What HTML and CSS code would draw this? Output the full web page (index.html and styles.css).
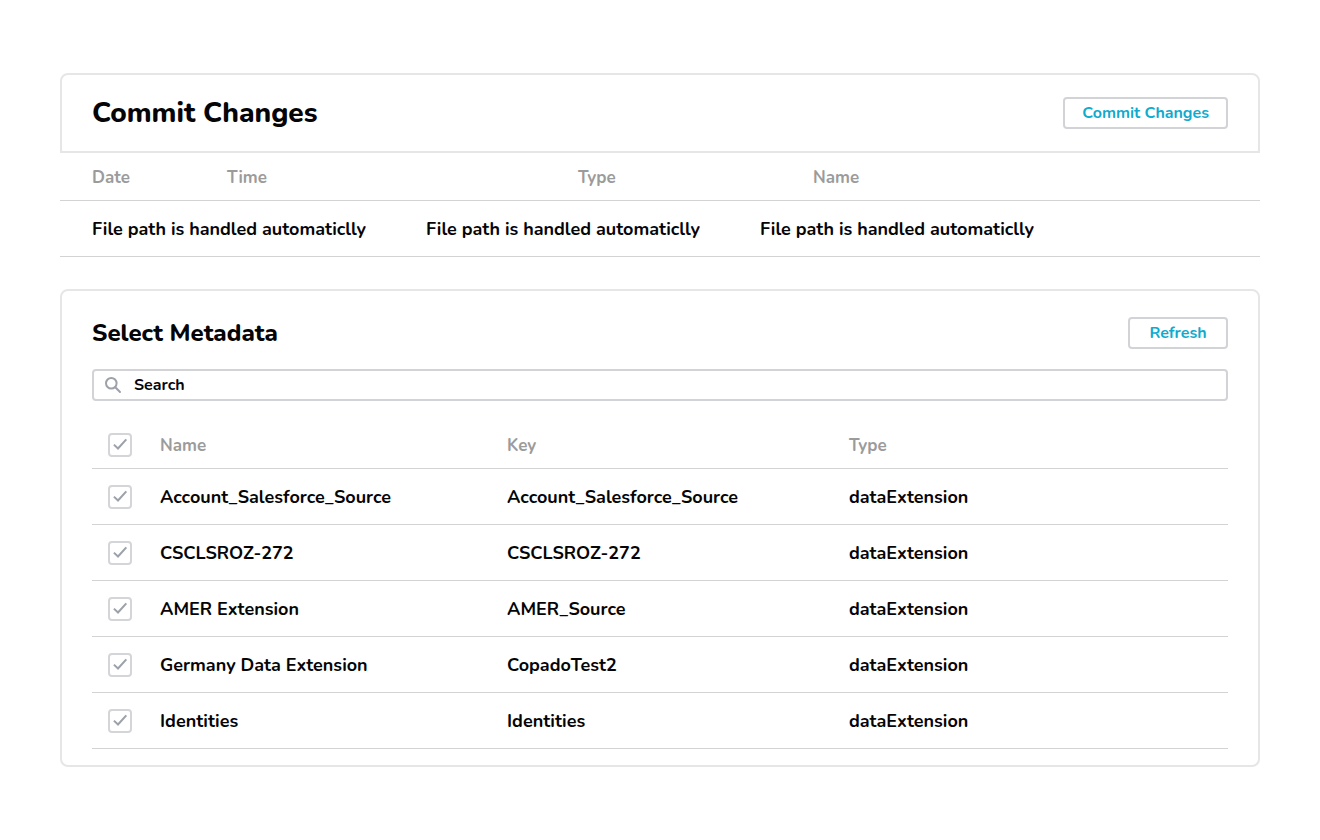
FILE: index.html
```html
<!DOCTYPE html>
<html lang="en">
<head>
<meta charset="utf-8">
<meta name="viewport" content="width=device-width, initial-scale=1">
<title>Commit Changes</title>
<link rel="stylesheet" href="styles.css">
</head>
<body>
<main class="page">
  <section class="commit">
    <header class="commit-header">
      <h1 class="commit-title">Commit Changes</h1>
      <button class="button" type="button">Commit Changes</button>
    </header>
    <table class="commit-table">
      <thead>
        <tr class="commit-columns"><th scope="col">Date</th><th scope="col">Time</th><th scope="col">Type</th><th scope="col">Name</th></tr>
      </thead>
      <tbody>
        <tr class="commit-row"><td>File path is handled automaticlly</td><td>File path is handled automaticlly</td><td>File path is handled automaticlly</td></tr>
      </tbody>
    </table>
  </section>

  <section class="metadata">
    <header class="metadata-header">
      <h2 class="metadata-title">Select Metadata</h2>
      <button class="button" type="button">Refresh</button>
    </header>
    <label class="search">
      <svg class="search-icon" viewBox="0 0 18 18" aria-hidden="true"><circle cx="7.3" cy="7.3" r="5.3"/><path d="M11.3 11.3 16 16"/></svg>
      <input class="search-input" type="search" placeholder="Search" aria-label="Search">
    </label>
    <table class="metadata-table">
      <colgroup><col class="col-check"><col class="col-name"><col class="col-key"><col class="col-type"></colgroup>
      <thead>
        <tr><th class="check-cell"><input class="check" type="checkbox" checked aria-label="Select all"></th><th scope="col">Name</th><th scope="col">Key</th><th scope="col">Type</th></tr>
      </thead>
      <tbody>
        <tr><td class="check-cell"><input class="check" type="checkbox" checked aria-label="Select Account_Salesforce_Source"></td><td>Account_Salesforce_Source</td><td>Account_Salesforce_Source</td><td>dataExtension</td></tr>
        <tr><td class="check-cell"><input class="check" type="checkbox" checked aria-label="Select CSCLSROZ-272"></td><td>CSCLSROZ-272</td><td>CSCLSROZ-272</td><td>dataExtension</td></tr>
        <tr><td class="check-cell"><input class="check" type="checkbox" checked aria-label="Select AMER Extension"></td><td>AMER Extension</td><td>AMER_Source</td><td>dataExtension</td></tr>
        <tr><td class="check-cell"><input class="check" type="checkbox" checked aria-label="Select Germany Data Extension"></td><td>Germany Data Extension</td><td>CopadoTest2</td><td>dataExtension</td></tr>
        <tr><td class="check-cell"><input class="check" type="checkbox" checked aria-label="Select Identities"></td><td>Identities</td><td>Identities</td><td>dataExtension</td></tr>
      </tbody>
    </table>
  </section>
</main>
</body>
</html>
```
FILE: styles.css
```css
* { box-sizing: border-box; }

body {
  margin: 0;
  background: #fff;
  color: #050507;
  font-family: Nunito, "Open Sans", "Noto Sans", sans-serif;
  font-size: 18px;
  font-weight: 700;
  line-height: 24px;
}

.page {
  display: flex;
  flex-direction: column;
  gap: 32px;
  padding: 73px 60px;
}

.commit-header {
  display: flex;
  align-items: center;
  justify-content: space-between;
  padding: 22px 30px;
  border: 2px solid #e6e6e7;
  border-radius: 8px 8px 0 0;
}

.commit-title,
.metadata-title {
  margin: 0;
  font-weight: 800;
  line-height: 32px;
}

.commit-title { font-size: 28px; }
.metadata-title { font-size: 24px; }

.button {
  min-width: 100px;
  height: 32px;
  padding: 0 17px;
  border: 2px solid #d1d3d7;
  border-radius: 4px;
  background: #fff;
  color: #10aace;
  font: inherit;
  font-size: 16px;
  font-weight: 700;
  line-height: 20px;
}

table {
  width: 100%;
  border-collapse: separate;
  border-spacing: 0;
}

th,
td {
  padding: 0;
  text-align: left;
  font-weight: 700;
}

th {
  padding-top: 2px;
  color: #9b9b9b;
  font-size: 17px;
}

.commit-table,
.commit-table thead,
.commit-table tbody { display: block; }

.commit-columns,
.commit-row {
  display: grid;
  align-items: center;
  padding: 0 32px;
  border-bottom: 1px solid #d3d3d4;
}

.commit-columns {
  grid-template-columns: 135fr 351fr 235fr 415fr;
  height: 48px;
}

.commit-row {
  grid-template-columns: 334fr 334fr 468fr;
  height: 56px;
}

.metadata {
  padding: 26px 30px 16px;
  border: 2px solid #e6e6e7;
  border-radius: 8px;
}

.metadata-header {
  display: flex;
  align-items: center;
  justify-content: space-between;
  margin-bottom: 20px;
}

.search {
  display: flex;
  align-items: center;
  gap: 12px;
  height: 32px;
  padding: 0 10px;
  margin-bottom: 20px;
  border: 2px solid #d1d3d6;
  border-radius: 4px;
}

.search-icon {
  flex: none;
  width: 18px;
  height: 18px;
  fill: none;
  stroke: #9ca1aa;
  stroke-width: 2;
  stroke-linecap: round;
}

.search-input {
  flex: 1;
  min-width: 0;
  padding: 0;
  border: 0;
  outline: 0;
  background: none;
  color: inherit;
  font: inherit;
  font-size: 16px;
  line-height: 20px;
}

.search-input::placeholder {
  color: inherit;
  opacity: 1;
}

.metadata-table { table-layout: fixed; }
.metadata-table th { height: 48px; }
.metadata-table td { height: 56px; }

.metadata-table th,
.metadata-table td { border-bottom: 1px solid #d3d3d4; }

.col-check { width: 68px; }
.col-name { width: 30.55%; }
.col-key { width: 30.1%; }

.metadata-table .check-cell {
  padding: 0 0 0 16px;
  line-height: 0;
}

.check {
  appearance: none;
  width: 24px;
  height: 24px;
  margin: 0;
  border: 2px solid #d3d5d8;
  border-radius: 4px;
  vertical-align: middle;
}

.check:checked {
  background: url("data:image/svg+xml,%3Csvg xmlns='http://www.w3.org/2000/svg' viewBox='0 0 20 20'%3E%3Cpath d='M3.9 9.6 8 13.5 16.3 4.3' fill='none' stroke='%239ca1aa' stroke-width='2'/%3E%3C/svg%3E") center / 20px 20px no-repeat;
}
```
